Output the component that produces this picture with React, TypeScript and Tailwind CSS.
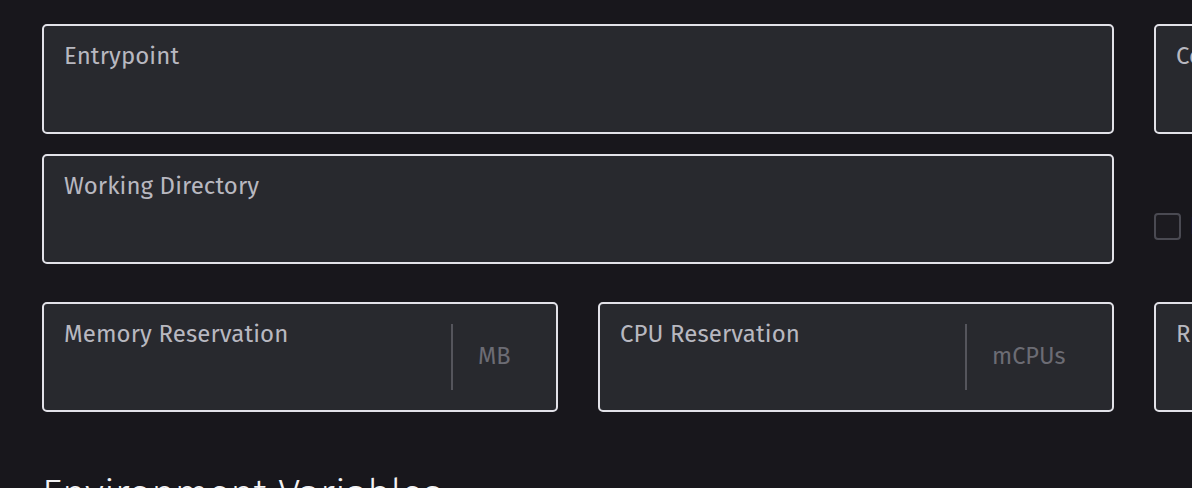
import React from "react";

const font = { fontFamily: '"Fira Sans", "Open Sans", "Noto Sans", sans-serif' };

function Field({ label, className = "" }: { label: string; className?: string }) {
  return (
    <div
      className={`h-[110px] rounded-[5px] border-2 border-[#e2e2e8] bg-[#28292e] flex ${className}`}
    >
      <div className="flex-1 pl-[20px] pt-[14px] text-[24px] tracking-[0.1px] leading-[32px] font-normal text-[#b8b8c0] whitespace-nowrap overflow-hidden">
        {label}
      </div>
    </div>
  );
}

function UnitField({ label, unit, unitWidth }: { label: string; unit: string; unitWidth: string }) {
  return (
    <div className="h-[110px] rounded-[5px] border-2 border-[#e2e2e8] bg-[#28292e] flex">
      <div className="flex-1 pl-[20px] pt-[14px] text-[24px] tracking-[0.1px] leading-[32px] font-normal text-[#b8b8c0] whitespace-nowrap">
        {label}
      </div>
      <div className="flex items-stretch py-[20px]">
        <div className="w-[2px] bg-[#55555c]" />
        <div className={`${unitWidth} pl-[25px] flex items-center text-[23.5px] text-[#6c6c74]`}>{unit}</div>
      </div>
    </div>
  );
}

export default function App() {
  return (
    <div className="w-[1192px] h-[488px] overflow-hidden bg-[#18171c]" style={font}>
      <div className="pl-[42px] pt-[24px] flex gap-[40px] w-[1400px]">
        <div className="w-[1072px] flex flex-col shrink-0">
          <Field label="Entrypoint" />
          <Field label="Working Directory" className="mt-[20px]" />
          <div className="mt-[38px] grid grid-cols-2 gap-[40px]">
            <UnitField label="Memory Reservation" unit="MB" unitWidth="w-[103px]" />
            <UnitField label="CPU Reservation" unit="mCPUs" unitWidth="w-[145px]" />
          </div>
          <h2 className="mt-[58px] text-[40px] leading-[48px] font-light text-[#f2f2f4] whitespace-nowrap">
            Environment Variables
          </h2>
        </div>
        <div className="w-[300px] flex flex-col shrink-0">
          <Field label="Command" />
          <div className="h-[130px] flex items-center pt-[54px]">
            <div className="w-[27px] h-[27px] rounded-[4px] border-2 border-[#4a4a52] bg-[#1c1b20]" />
            <span className="ml-[9px] text-[24px] text-[#b8b8c0]">Privileged</span>
          </div>
          <div className="mt-[38px]">
            <Field label="Run As User" />
          </div>
        </div>
      </div>
    </div>
  );
}
